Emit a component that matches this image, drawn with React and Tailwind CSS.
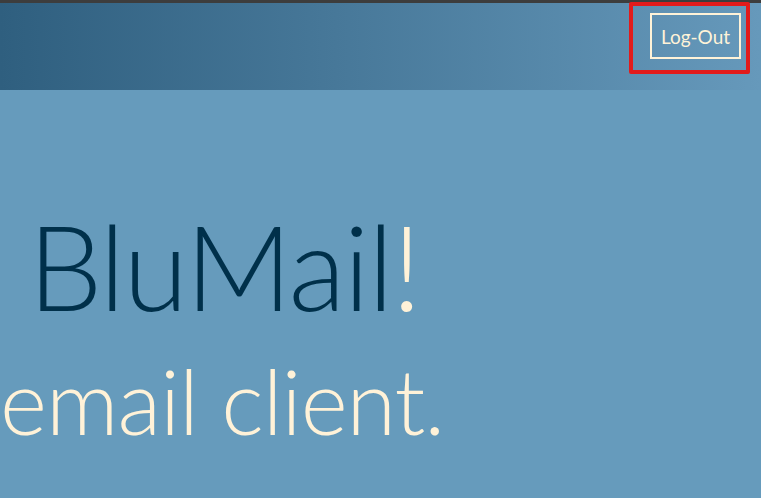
export default function App() {
  return (
    <div className="w-[761px] h-[498px] overflow-hidden bg-[#669bbc] relative" style={{ fontFamily: 'Lato, "Open Sans", sans-serif' }}>
      <div className="h-[3px] bg-[#3d3d3d]" />
      <header className="h-[87px] bg-gradient-to-r from-[#2f5f7f] to-[#6699bb] flex items-center justify-end pr-[20px]">
        <button className="mt-[-22px] w-[91px] h-[46px] border-2 border-[#fff3d8] text-[#fff3d8] text-[19px] leading-none pt-[2px]">
          Log-Out
        </button>
      </header>
      <main className="flex flex-col">
        <h1 className="mt-[117px] ml-[28px] text-[118px] leading-none font-light tracking-[-2px] text-[#00304a] whitespace-nowrap">
          BluMail<span className="text-[#fff2d8]">!</span>
        </h1>
        <p className="mt-[30px] ml-0 text-[90px] leading-none font-light tracking-[-1px] text-[#fff2d8] whitespace-nowrap">
          email client.
        </p>
      </main>
      <div className="absolute left-[629px] top-[2px] w-[121px] h-[72px] border-4 border-[#e21b1b] rounded-[2px]" />
    </div>
  );
}
